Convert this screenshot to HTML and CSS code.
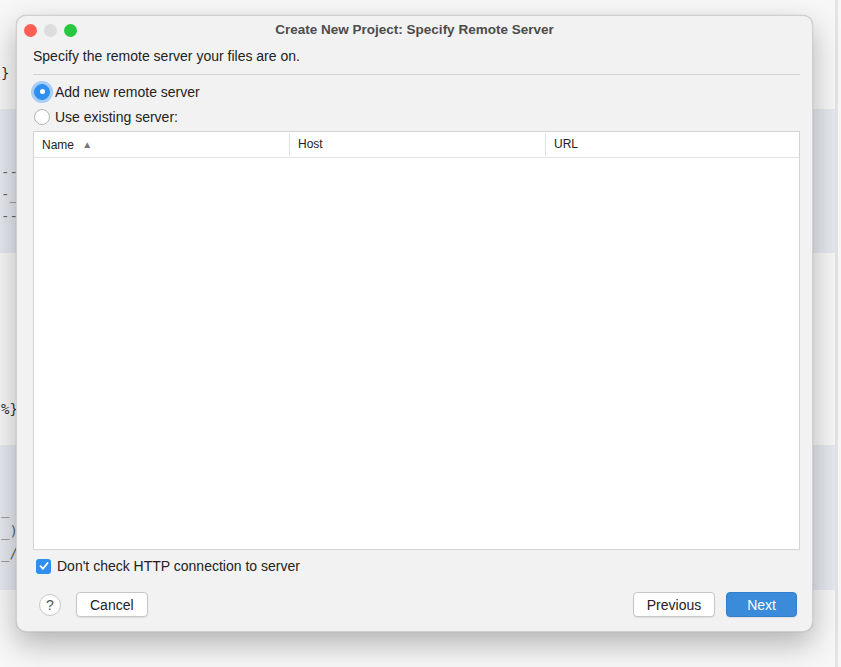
FILE: index.html
```html
<!DOCTYPE html>
<html lang="en">
<head>
    <meta charset="UTF-8">
    <title>Create New Project: Specify Remote Server</title>
    <link rel="stylesheet" href="styles.css">
</head>
<body>
    <div class="editor">
        <div class="plain top">
            <div class="code-line"><span class="code">}</span></div>
        </div>
        <div class="band first">
            <div class="code-line"><span class="code">--</span></div>
            <div class="code-line"><span class="code">-_</span></div>
            <div class="code-line"><span class="code">--</span></div>
        </div>
        <div class="plain middle">
            <div class="code-line"><span class="code">%}</span></div>
        </div>
        <div class="band second">
            <div class="code-line"><span class="code">_</span></div>
            <div class="code-line"><span class="code">_)</span></div>
            <div class="code-line"><span class="code">_/</span></div>
        </div>
    </div>

    <div class="window">
        <div class="titlebar">
            <div class="lights">
                <span class="light red"></span>
                <span class="light gray"></span>
                <span class="light green"></span>
            </div>
            <div class="title">Create New Project: Specify Remote Server</div>
        </div>
        <div class="content">
            <div class="desc">Specify the remote server your files are on.</div>
            <div class="separator"></div>
            <label class="radio-row">
                <span class="radio checked"></span>
                Add new remote server
            </label>
            <label class="radio-row">
                <span class="radio"></span>
                Use existing server:
            </label>
            <div class="table">
                <div class="table-head">
                    <div class="col">Name <span class="sort">&#9650;</span></div>
                    <div class="col">Host</div>
                    <div class="col">URL</div>
                </div>
                <div class="table-body"></div>
            </div>
            <label class="check-row">
                <span class="checkbox">
                    <svg width="10" height="10" viewBox="0 0 10 10"><path d="M1.5 5.2 L4 7.8 L8.6 2" fill="none" stroke="#fff" stroke-width="1.8" stroke-linecap="round" stroke-linejoin="round"/></svg>
                </span>
                Don't check HTTP connection to server
            </label>
            <div class="buttons">
                <span class="help">?</span>
                <button class="btn">Cancel</button>
                <div class="spacer"></div>
                <button class="btn">Previous</button>
                <button class="btn primary">Next</button>
            </div>
        </div>
    </div>
</body>
</html>
```

FILE: styles.css
```css
html, body {
    margin: 0;
    padding: 0;
}
body {
    width: 841px;
    height: 667px;
    overflow: hidden;
    position: relative;
    background-color: #f7f7f7;
    font-family: "Liberation Sans", Arial, sans-serif;
}
.editor {
    height: 667px;
    border-right: 3px solid #e4e4e4;
    width: 838px;
    box-sizing: border-box;
    background-color: #f7f7f7;
    overflow: hidden;
}
.plain, .band {
    box-sizing: border-box;
}
.band {
    background-color: #e5e9ef;
    color: #555;
}
.top {
    height: 109px;
    padding-top: 62px;
}
.first {
    height: 144px;
    padding-top: 52px;
}
.middle {
    height: 192px;
    padding-top: 145px;
}
.second {
    height: 145px;
    padding-top: 53px;
}
.code-line {
    height: 22px;
    font-family: "DejaVu Sans Mono", monospace;
    font-size: 14px;
    color: #333;
    line-height: 22px;
}
.band .code-line {
    color: #666;
}
.code {
    padding-left: 1px;
}

.window {
    position: absolute;
    left: 16px;
    top: 15px;
    width: 797px;
    height: 617px;
    box-sizing: border-box;
    background-color: #f2f2f2;
    border: 1px solid #d0d0d0;
    border-radius: 10px;
    box-shadow: 0 12px 30px rgba(0, 0, 0, 0.28), 0 0 1px rgba(0, 0, 0, 0.3);
    display: flex;
    flex-direction: column;
}
.titlebar {
    height: 27px;
    display: flex;
    align-items: center;
    position: relative;
}
.lights {
    display: flex;
    gap: 7px;
    padding-left: 7px;
    padding-top: 1px;
}
.light {
    width: 13px;
    height: 13px;
    border-radius: 50%;
    display: inline-block;
}
.red { background-color: #fd5f57; }
.gray { background-color: #dcdcdc; }
.green { background-color: #27c840; }
.title {
    position: absolute;
    left: 0;
    right: 0;
    top: 6px;
    text-align: center;
    font-weight: bold;
    font-size: 13.5px;
    color: #4c4c4c;
}
.content {
    flex: 1;
    display: flex;
    flex-direction: column;
    padding: 0 12px 0 16px;
}
.desc {
    height: 25px;
    padding-top: 3px;
    box-sizing: border-box;
    font-size: 14px;
    color: #222;
    line-height: 20px;
}
.separator {
    height: 1px;
    background-color: #d3d3d3;
    margin-top: 6px;
    margin-bottom: 4px;
}
.radio-row {
    height: 25px;
    display: flex;
    align-items: center;
    font-size: 14px;
    color: #222;
}
.radio {
    width: 16px;
    height: 16px;
    border-radius: 50%;
    border: 1px solid #b4b4b4;
    background-color: #fff;
    margin-left: 1px;
    margin-right: 5px;
    box-sizing: border-box;
    position: relative;
}
.radio.checked {
    background-color: #2f8ff0;
    border-color: #2f8ff0;
    box-shadow: 0 0 0 3px #a7cdf6;
}
.radio.checked::after {
    content: "";
    position: absolute;
    left: 4.5px;
    top: 4.5px;
    width: 5px;
    height: 5px;
    border-radius: 50%;
    background-color: #fff;
}
.table {
    margin-top: 2px;
    height: 419px;
    background-color: #fff;
    border: 1px solid #d4d4d4;
    box-sizing: border-box;
    display: flex;
    flex-direction: column;
}
.table-head {
    height: 25px;
    display: grid;
    grid-template-columns: 256px 256px 1fr;
    border-bottom: 1px solid #e1e1e1;
}
.col {
    font-size: 12px;
    color: #222;
    padding-left: 8px;
    border-right: 1px solid #e1e1e1;
    margin: 2px 0 1px;
    line-height: 21px;
}
.col:last-child {
    border-right: none;
}
.sort {
    font-size: 10px;
    color: #777;
    margin-left: 5px;
    vertical-align: 1px;
}
.table-body {
    flex: 1;
}
.check-row {
    height: 32px;
    display: flex;
    align-items: center;
    font-size: 14px;
    color: #222;
}
.checkbox {
    width: 15px;
    height: 15px;
    border-radius: 3px;
    background-color: #2f8ff0;
    margin-left: 3px;
    margin-right: 6px;
    display: flex;
    align-items: center;
    justify-content: center;
}
.buttons {
    margin-top: 10px;
    margin-right: 3px;
    height: 25px;
    display: flex;
    align-items: center;
    gap: 11px;
}
.help {
    width: 22px;
    height: 22px;
    box-sizing: border-box;
    border-radius: 50%;
    border: 1px solid #c8c8c8;
    background-color: #fff;
    font-size: 14px;
    color: #555;
    display: flex;
    align-items: center;
    justify-content: center;
    margin-left: 6px;
    margin-right: 4px;
}
.btn {
    height: 25px;
    padding: 0 13px;
    background-color: #fff;
    border: 1px solid #c6c6c6;
    border-radius: 4px;
    font-family: "Liberation Sans", Arial, sans-serif;
    font-size: 14px;
    color: #222;
    box-shadow: 0 1px 1px rgba(0, 0, 0, 0.08);
}
.btn.primary {
    background-color: #3a8bd9;
    border-color: #3280cc;
    color: #fff;
    padding: 0 20px;
}
.spacer {
    flex: 1;
}
```
